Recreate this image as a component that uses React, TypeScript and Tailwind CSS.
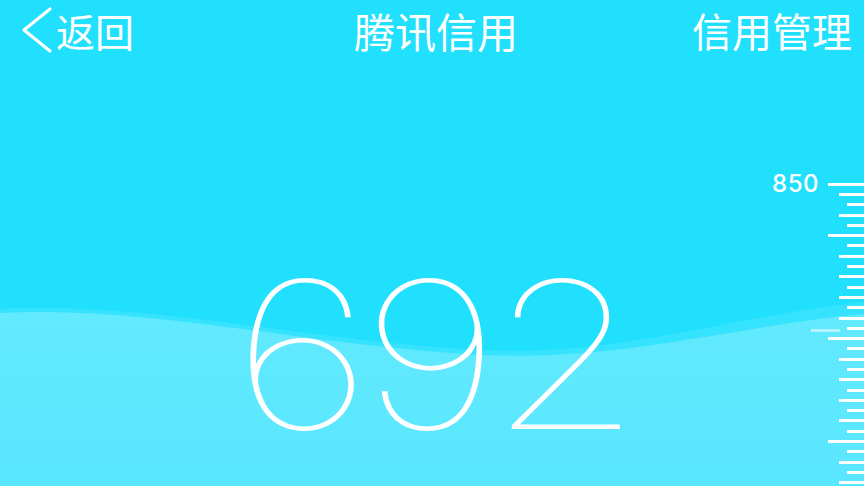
import React from 'react';

const ticks = Array.from({ length: 30 }, (_, i) => {
  if (i === 0 || i % 10 === 5) return 'long';
  return i % 2 === 1 ? 'medium' : 'short';
});

const tickWidth: Record<string, string> = {
  long: 'w-[36px]',
  medium: 'w-[25px]',
  short: 'w-[17px]',
};

const Wave = () => (
  <svg className="absolute inset-0 h-full w-full" viewBox="0 0 864 486" preserveAspectRatio="none">
    <defs>
      <linearGradient id="sea" x1="0" y1="0" x2="0" y2="1">
        <stop offset="0" stopColor="#62eafe" />
        <stop offset="1" stopColor="#58e6fe" />
      </linearGradient>
    </defs>
    <path
      d="M0 309 C 150 301, 300 340, 480 350 C 620 357, 740 314, 864 302 L864 486 L0 486 Z"
      fill="#ffffff"
      fillOpacity="0.1"
    />
    <path
      d="M0 313 C 150 305, 300 345, 480 355 C 620 362, 740 325, 864 314 L864 486 L0 486 Z"
      fill="url(#sea)"
    />
  </svg>
);

const Ruler = () => (
  <div className="absolute right-0 top-[179px] flex flex-col items-end">
    {ticks.map((t, i) => (
      <div key={i} className="relative flex h-[10.3px] items-center">
        {i === 0 && (
          <span className="mr-[9px] text-[24px] font-medium leading-none tracking-[0.5px] text-white [font-family:Inter,sans-serif]">
            850
          </span>
        )}
        {i === 14 && <div className="absolute right-[24px] top-[6px] h-[3px] w-[29px] bg-white/50" />}
        <div className={`h-[3px] bg-white ${tickWidth[t]}`} />
      </div>
    ))}
  </div>
);

export default function App() {
  return (
    <div className="relative h-[486px] w-[864px] overflow-hidden bg-[#20e0fe] text-white [font-family:'Noto_Sans_CJK_SC',sans-serif]">
      <Wave />
      <div className="relative grid h-[60px] grid-cols-[1fr_auto_1fr] items-center pl-[20px] pr-[12px]">
        <div className="flex items-center">
          <svg width="34" height="48" viewBox="0 0 34 48">
            <path d="M30 3 L4 24 L30 45" fill="none" stroke="white" strokeWidth="3.2" strokeLinecap="round" strokeLinejoin="round" />
          </svg>
          <span className="ml-[2px] text-[39px] leading-none">返回</span>
        </div>
        <div className="text-center text-[41px] leading-none">腾讯信用</div>
        <div className="text-right text-[40px] leading-none">信用管理</div>
      </div>
      <div className="relative mt-[192px] flex justify-center">
        <span className="inline-block scale-x-[1.2] text-[205px] font-thin leading-none tracking-[-9px] [font-family:Inter,sans-serif]">
          692
        </span>
      </div>
      <Ruler />
    </div>
  );
}
